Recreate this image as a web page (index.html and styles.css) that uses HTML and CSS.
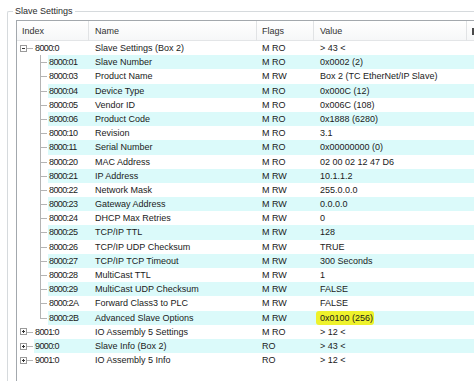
FILE: index.html
```
<!DOCTYPE html>
<html>
<head>
<meta charset="utf-8">
<title>Slave Settings</title>
<link rel="stylesheet" href="styles.css">
</head>
<body>
<div class="group">
  <div class="group-title">Slave Settings</div>
  <div class="list">
    <div class="head">
      <div class="h ci">Index</div>
      <div class="h cn">Name</div>
      <div class="h cf">Flags</div>
      <div class="h cv">Value</div>
      <div class="h cx"><span class="sb"></span></div>
    </div>

    <div class="row">
      <div class="idx"><span class="tree top"><svg width="7" height="7" viewBox="0 0 7 7"><rect x="0.5" y="0.5" width="6" height="6" fill="#fff" stroke="#9a9a9a"/><path d="M2 3.5h3" stroke="#333"/></svg></span><span class="id">8000:0</span></div>
      <div class="cn">Slave Settings (Box 2)</div><div class="cf">M RO</div><div class="cv">&gt; 43 &lt;</div><div></div>
    </div>
    <div class="row alt">
      <div class="idx"><span class="tree kid"></span><span class="id">8000:01</span></div>
      <div class="cn">Slave Number</div><div class="cf">M RO</div><div class="cv">0x0002 (2)</div><div></div>
    </div>
    <div class="row">
      <div class="idx"><span class="tree kid"></span><span class="id">8000:03</span></div>
      <div class="cn">Product Name</div><div class="cf">M RW</div><div class="cv">Box 2 (TC EtherNet/IP Slave)</div><div></div>
    </div>
    <div class="row alt">
      <div class="idx"><span class="tree kid"></span><span class="id">8000:04</span></div>
      <div class="cn">Device Type</div><div class="cf">M RO</div><div class="cv">0x000C (12)</div><div></div>
    </div>
    <div class="row">
      <div class="idx"><span class="tree kid"></span><span class="id">8000:05</span></div>
      <div class="cn">Vendor ID</div><div class="cf">M RO</div><div class="cv">0x006C (108)</div><div></div>
    </div>
    <div class="row alt">
      <div class="idx"><span class="tree kid"></span><span class="id">8000:06</span></div>
      <div class="cn">Product Code</div><div class="cf">M RO</div><div class="cv">0x1888 (6280)</div><div></div>
    </div>
    <div class="row">
      <div class="idx"><span class="tree kid"></span><span class="id">8000:10</span></div>
      <div class="cn">Revision</div><div class="cf">M RO</div><div class="cv">3.1</div><div></div>
    </div>
    <div class="row alt">
      <div class="idx"><span class="tree kid"></span><span class="id">8000:11</span></div>
      <div class="cn">Serial Number</div><div class="cf">M RO</div><div class="cv">0x00000000 (0)</div><div></div>
    </div>
    <div class="row">
      <div class="idx"><span class="tree kid"></span><span class="id">8000:20</span></div>
      <div class="cn">MAC Address</div><div class="cf">M RO</div><div class="cv">02 00 02 12 47 D6</div><div></div>
    </div>
    <div class="row alt">
      <div class="idx"><span class="tree kid"></span><span class="id">8000:21</span></div>
      <div class="cn">IP Address</div><div class="cf">M RW</div><div class="cv">10.1.1.2</div><div></div>
    </div>
    <div class="row">
      <div class="idx"><span class="tree kid"></span><span class="id">8000:22</span></div>
      <div class="cn">Network Mask</div><div class="cf">M RW</div><div class="cv">255.0.0.0</div><div></div>
    </div>
    <div class="row alt">
      <div class="idx"><span class="tree kid"></span><span class="id">8000:23</span></div>
      <div class="cn">Gateway Address</div><div class="cf">M RW</div><div class="cv">0.0.0.0</div><div></div>
    </div>
    <div class="row">
      <div class="idx"><span class="tree kid"></span><span class="id">8000:24</span></div>
      <div class="cn">DHCP Max Retries</div><div class="cf">M RW</div><div class="cv">0</div><div></div>
    </div>
    <div class="row alt">
      <div class="idx"><span class="tree kid"></span><span class="id">8000:25</span></div>
      <div class="cn">TCP/IP TTL</div><div class="cf">M RW</div><div class="cv">128</div><div></div>
    </div>
    <div class="row">
      <div class="idx"><span class="tree kid"></span><span class="id">8000:26</span></div>
      <div class="cn">TCP/IP UDP Checksum</div><div class="cf">M RW</div><div class="cv">TRUE</div><div></div>
    </div>
    <div class="row alt">
      <div class="idx"><span class="tree kid"></span><span class="id">8000:27</span></div>
      <div class="cn">TCP/IP TCP Timeout</div><div class="cf">M RW</div><div class="cv">300 Seconds</div><div></div>
    </div>
    <div class="row">
      <div class="idx"><span class="tree kid"></span><span class="id">8000:28</span></div>
      <div class="cn">MultiCast TTL</div><div class="cf">M RW</div><div class="cv">1</div><div></div>
    </div>
    <div class="row alt">
      <div class="idx"><span class="tree kid"></span><span class="id">8000:29</span></div>
      <div class="cn">MultiCast UDP Checksum</div><div class="cf">M RW</div><div class="cv">FALSE</div><div></div>
    </div>
    <div class="row">
      <div class="idx"><span class="tree kid"></span><span class="id">8000:2A</span></div>
      <div class="cn">Forward Class3 to PLC</div><div class="cf">M RW</div><div class="cv">FALSE</div><div></div>
    </div>
    <div class="row alt">
      <div class="idx"><span class="tree kid last"></span><span class="id">8000:2B</span></div>
      <div class="cn">Advanced Slave Options</div><div class="cf">M RW</div><div class="cv"><span class="hl">0x0100 (256)</span></div><div></div>
    </div>
    <div class="row">
      <div class="idx"><span class="tree top"><svg width="7" height="7" viewBox="0 0 7 7"><rect x="0.5" y="0.5" width="6" height="6" fill="#fff" stroke="#9a9a9a"/><path d="M2 3.5h3M3.5 2v3" stroke="#333"/></svg></span><span class="id">8001:0</span></div>
      <div class="cn">IO Assembly 5 Settings</div><div class="cf">M RO</div><div class="cv">&gt; 12 &lt;</div><div></div>
    </div>
    <div class="row alt">
      <div class="idx"><span class="tree top"><svg width="7" height="7" viewBox="0 0 7 7"><rect x="0.5" y="0.5" width="6" height="6" fill="#fff" stroke="#9a9a9a"/><path d="M2 3.5h3M3.5 2v3" stroke="#333"/></svg></span><span class="id">9000:0</span></div>
      <div class="cn">Slave Info (Box 2)</div><div class="cf">RO</div><div class="cv">&gt; 43 &lt;</div><div></div>
    </div>
    <div class="row">
      <div class="idx"><span class="tree top"><svg width="7" height="7" viewBox="0 0 7 7"><rect x="0.5" y="0.5" width="6" height="6" fill="#fff" stroke="#9a9a9a"/><path d="M2 3.5h3M3.5 2v3" stroke="#333"/></svg></span><span class="id">9001:0</span></div>
      <div class="cn">IO Assembly 5 Info</div><div class="cf">RO</div><div class="cv">&gt; 12 &lt;</div><div></div>
    </div>
  </div>
</div>
</body>
</html>
```

FILE: styles.css
```
html, body {
  margin: 0;
  overflow: hidden;
  background: #fff;
}
body {
  font-family: "Liberation Sans", Arial, sans-serif;
  font-size: 9px;
  color: #1a1a1a;
}
.group {
  box-sizing: border-box;
  margin: 11px 0 0 7px;
  height: 370px;
  border-top: 1px solid #d6dadd;
  border-left: 1px solid #d6dadd;
  border-top-left-radius: 2px;
  padding-left: 8px;
}
.group-title {
  display: block;
  width: max-content;
  margin: -6px 0 0 -3px;
  padding: 0 2px;
  background: #fff;
  line-height: 11px;
  color: #2b2b2b;
}
.list {
  margin-top: 3px;
  border-top: 1px solid #a3a8ad;
  border-left: 1px solid #a3a8ad;
  height: 360px;
  overflow: hidden;
}
.head {
  display: grid;
  grid-template-columns: 72px 168px 57px 153px 1fr;
  height: 19px;
  background: linear-gradient(#ffffff, #f6f7f8);
  border-bottom: 1px solid #e3e5e7;
}
.h {
  line-height: 20px;
  color: #333;
  border-right: 1px solid #e1e3e5;
}
.h.ci { padding-left: 5px; }
.h.cx { border-right: none; }
.sb {
  display: inline-block;
  width: 3px;
  height: 7px;
  margin-left: 5px;
  background: #4a4a4a;
  vertical-align: middle;
}
.cn { padding-left: 6px; }
.cf { padding-left: 5px; }
.cv { padding-left: 6px; }
.row {
  display: grid;
  grid-template-columns: 72px 168px 57px 153px 1fr;
  height: 14.2px;
  line-height: 14.2px;
  white-space: nowrap;
}
.row.alt {
  background: #dbfafa;
}
.idx {
  display: flex;
  align-items: stretch;
}
.tree {
  position: relative;
  flex: none;
  background: #fff;
}
.tree.top {
  width: 17px;
  display: flex;
  align-items: center;
}
.tree.top svg {
  display: block;
  margin-left: 3px;
}
.tree.top::after {
  content: "";
  position: absolute;
  left: 10px;
  width: 6px;
  top: 7px;
  border-top: 1px solid #b4b4b4;
}
.tree.kid {
  width: 31px;
}
.tree.kid::before {
  content: "";
  position: absolute;
  left: 23px;
  top: 0;
  bottom: 0;
  border-left: 1px solid #b4b4b4;
}
.tree.kid.last::before {
  bottom: auto;
  height: 7px;
}
.tree.kid::after {
  content: "";
  position: absolute;
  left: 23px;
  width: 7px;
  top: 7px;
  border-top: 1px solid #b4b4b4;
}
.id {
  padding-left: 1px;
  letter-spacing: -0.6px;
}
.hl {
  display: inline-block;
  margin-left: -4px;
  padding: 0 1px 0 4px;
  line-height: 14px;
  background: #eef22c;
  border-radius: 3px;
}
```
